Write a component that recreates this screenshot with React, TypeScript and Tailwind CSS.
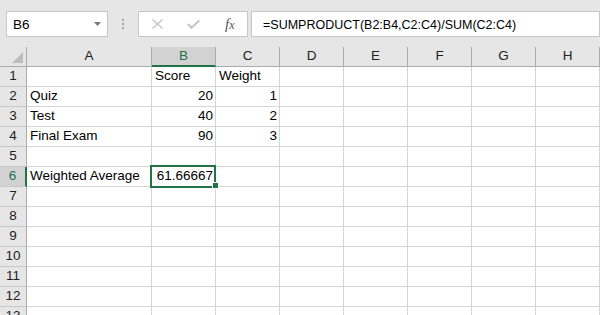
import React from "react";

const cols = ["A", "B", "C", "D", "E", "F", "G", "H"];

type Cell = { text?: string; align?: "left" | "right" };

const data: Record<number, Record<string, Cell>> = {
  1: { B: { text: "Score" }, C: { text: "Weight" } },
  2: { A: { text: "Quiz" }, B: { text: "20", align: "right" }, C: { text: "1", align: "right" } },
  3: { A: { text: "Test" }, B: { text: "40", align: "right" }, C: { text: "2", align: "right" } },
  4: { A: { text: "Final Exam" }, B: { text: "90", align: "right" }, C: { text: "3", align: "right" } },
  6: { A: { text: "Weighted Average" }, B: { text: "61.66667", align: "right" } },
};

export default function App() {
  const rows = Array.from({ length: 13 }, (_, i) => i + 1);
  return (
    <div className="w-[600px] h-[315px] overflow-hidden bg-white font-['Liberation_Sans',Arial,sans-serif] text-black">
      {/* Formula bar */}
      <div className="h-[47px] bg-[#e6e6e6] flex items-start pt-[11px] pl-[6px]">
        <div className="w-[102px] h-[26px] bg-white border border-[#c6c6c6] flex items-center pl-[6px] pr-[6px] text-[13.5px] leading-[16px]">
          <span className="pt-[1px]">B6</span>
          <svg className="ml-auto" width="7" height="4" viewBox="0 0 7 4">
            <polygon points="0,0 7,0 3.5,4" fill="#7a7a7a" />
          </svg>
        </div>
        <div className="w-[30px] h-[26px] flex flex-col items-center justify-center gap-[2px]">
          <div className="w-[2px] h-[2px] bg-[#a6a6a6]" />
          <div className="w-[2px] h-[2px] bg-[#a6a6a6]" />
          <div className="w-[2px] h-[2px] bg-[#a6a6a6]" />
        </div>
        <div className="w-[110px] h-[26px] bg-white border border-[#c6c6c6] flex items-center">
          <svg className="ml-[13px]" width="11" height="10" viewBox="0 0 11 10">
            <path d="M0.5 0.5 L10.5 9.5 M10.5 0.5 L0.5 9.5" stroke="#c4c4c4" strokeWidth="1.4" fill="none" />
          </svg>
          <svg className="ml-[24px]" width="13" height="9" viewBox="0 0 13 9">
            <path d="M0.8 4 L4.5 7.8 L12.3 0.5" stroke="#c4c4c4" strokeWidth="2" fill="none" />
          </svg>
          <span className="ml-[25px] font-['Liberation_Serif',serif] italic text-[15px] leading-[16px] text-[#555]">
            f<span className="text-[12px]">x</span>
          </span>
        </div>
        <div className="ml-[3px] flex-1 h-[26px] bg-white border border-[#c6c6c6] flex items-center pl-[11px] text-[12.5px] leading-[16px]">
          <span className="pt-[1px]">=SUMPRODUCT(B2:B4,C2:C4)/SUM(C2:C4)</span>
        </div>
      </div>

      {/* Grid */}
      <div className="grid grid-cols-[27px_125px_repeat(7,64px)] text-[13.5px] leading-[16px]">
        {/* header row */}
        <div className="h-[20px] bg-[#e6e6e6] border-r border-b border-[#ababab] relative">
          <svg className="absolute left-[12px] top-[5px]" width="11" height="11" viewBox="0 0 11 11">
            <polygon points="11,0 11,11 0,11" fill="#bdbdbd" />
          </svg>
        </div>
        {cols.map((c) =>
          c === "B" ? (
            <div
              key={c}
              className="h-[20px] bg-[#d2d2d2] border-r border-[#ababab] border-b-2 border-b-[#217346] flex items-end justify-center text-[#217346]"
            >
              <span className="pb-[1px]">{c}</span>
            </div>
          ) : (
            <div
              key={c}
              className="h-[20px] bg-[#e6e6e6] border-r border-b border-[#ababab] flex items-end justify-center text-[#222]"
            >
              <span className="pb-[2px]">{c}</span>
            </div>
          )
        )}

        {rows.map((r) => (
          <React.Fragment key={r}>
            {r === 6 ? (
              <div className="h-[20px] bg-[#d2d2d2] border-r-2 border-r-[#217346] border-b border-b-[#c8c8c8] flex items-end justify-center text-[#217346]">
                <span className="pb-[2px]">{r}</span>
              </div>
            ) : (
              <div className="h-[20px] bg-[#e6e6e6] border-r border-r-[#ababab] border-b border-b-[#c8c8c8] flex items-end justify-center text-[#222]">
                <span className="pb-[2px]">{r}</span>
              </div>
            )}
            {cols.map((c) => {
              const cell = data[r]?.[c];
              const selected = r === 6 && c === "B";
              return (
                <div
                  key={c}
                  className={
                    "h-[20px] border-r border-b border-[#d4d4d4] flex items-end whitespace-nowrap " +
                    (cell?.align === "right" ? "justify-end pr-[2px] " : "justify-start pl-[3px] ") +
                    (selected ? "relative z-10" : "")
                  }
                >
                  {cell?.text && <span className="pb-[2px]">{cell.text}</span>}
                  {selected && (
                    <>
                      <div className="absolute -left-[2px] -top-[2px] w-[66px] h-[23px] border-2 border-[#217346]" />
                      <div className="absolute left-[60px] top-[15px] w-[7px] h-[7px] bg-[#217346] border border-white" />
                    </>
                  )}
                </div>
              );
            })}
          </React.Fragment>
        ))}
      </div>
    </div>
  );
}
